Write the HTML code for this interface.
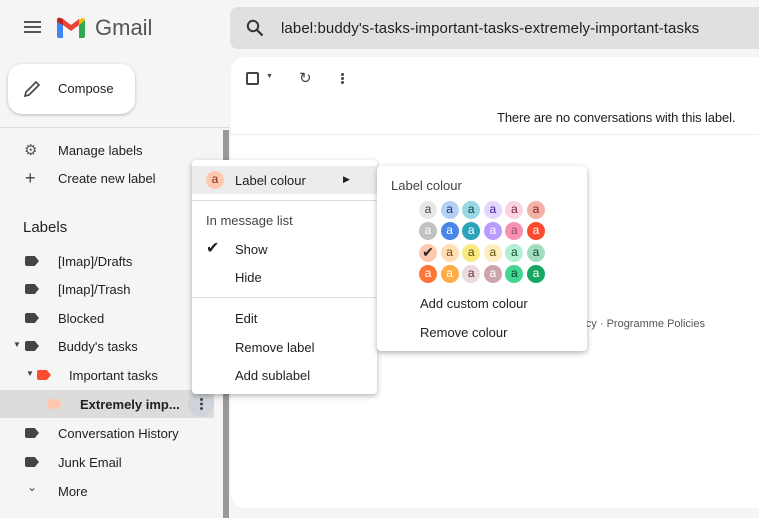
<!DOCTYPE html>
<html><head><style>
*{box-sizing:border-box;margin:0;padding:0}
body{width:759px;height:518px;overflow:hidden;background:#f5f5f5;font-family:"Liberation Sans",sans-serif;color:#202124;position:relative;font-size:13px}
.a{position:absolute}
.lbl{position:absolute;left:25px;width:14px;height:10px;background:#444;border-radius:2px 0 0 2px;clip-path:polygon(0 0,70% 0,100% 50%,70% 100%,0 100%)}
.t{position:absolute;font-size:13px;color:#202124;white-space:nowrap}
.menu{position:absolute;background:#fff;border-radius:4px;box-shadow:0 2px 6px rgba(0,0,0,.3)}
.sw{position:absolute;width:18px;height:18px;border-radius:50%;font-size:12px;text-align:center;line-height:17px}
</style></head><body>
<div class="a" style="left:24px;top:21px;width:17px;height:2px;background:#555;box-shadow:0 5px 0 #555,0 10px 0 #555"></div>
<svg class="a" style="left:57px;top:17px" width="28" height="21" viewBox="0 0 28 21">
<path d="M0 3v16a2 2 0 0 0 2 2h4V8z" fill="#4285f4"/>
<path d="M22 8v13h4a2 2 0 0 0 2-2V3z" fill="#34a853"/>
<path d="M22 2v6l6-5V3c0-2-3-3-4-1z" fill="#fbbc04"/>
<path d="M6 8V2l8 6 8-6v6l-8 6z" fill="#ea4335"/>
<path d="M0 3v2l6 3V2L4 1C2 0 0 1 0 3z" fill="#c5221f"/>
</svg>
<div class="t" style="left:95px;top:15px;font-size:22px;color:#555">Gmail</div>
<div class="a" style="left:230px;top:7px;width:540px;height:42px;background:#e0e0e0;border-radius:8px"></div>
<svg class="a" style="left:246px;top:19px" width="18" height="18" viewBox="0 0 18 18"><circle cx="7" cy="7" r="5.2" fill="none" stroke="#333" stroke-width="2"/><path d="M11 11l5.5 5.5" stroke="#333" stroke-width="2.2"/></svg>
<div class="t" style="left:281px;top:20px;font-size:15px;color:#202124;letter-spacing:0.1px">label:buddy's-tasks-important-tasks-extremely-important-tasks</div>
<div class="a" style="left:8px;top:64px;width:127px;height:50px;background:#fff;border-radius:14px;box-shadow:0 1px 3px rgba(0,0,0,.25)"></div>
<svg class="a" style="left:23px;top:80px" width="18" height="18" viewBox="0 0 18 18"><path d="M2 16l1-4L13 2l3 3L6 15z" fill="none" stroke="#444" stroke-width="1.6"/></svg>
<div class="t" style="left:58px;top:81px">Compose</div>
<div class="a" style="left:0;top:127px;width:230px;height:1px;background:#ddd"></div>
<div class="t" style="left:24px;top:141px;font-size:15px;color:#555">⚙</div>
<div class="t" style="left:58px;top:143px">Manage labels</div>
<div class="t" style="left:25px;top:168px;font-size:18px;color:#444">+</div>
<div class="t" style="left:58px;top:171px">Create new label</div>
<div class="t" style="left:23px;top:219px;font-size:15px">Labels</div>
<div class="lbl" style="top:256px"></div><div class="t" style="left:58px;top:254px">[Imap]/Drafts</div>
<div class="lbl" style="top:284px"></div><div class="t" style="left:58px;top:282px">[Imap]/Trash</div>
<div class="lbl" style="top:313px"></div><div class="t" style="left:58px;top:311px">Blocked</div>
<div class="t" style="left:13px;top:340px;font-size:8px;color:#444">▼</div>
<div class="lbl" style="top:341px"></div><div class="t" style="left:58px;top:339px">Buddy's tasks</div>
<div class="t" style="left:26px;top:369px;font-size:8px;color:#444">▼</div>
<div class="lbl" style="top:370px;left:37px;background:#fb4c2f"></div><div class="t" style="left:69px;top:368px">Important tasks</div>
<div class="a" style="left:0;top:390px;width:214px;height:28px;background:#dcdcdc"></div>
<div class="lbl" style="top:399px;left:48px;background:#ffc8af"></div><div class="t" style="left:80px;top:397px;font-weight:bold">Extremely imp...</div>
<div class="a" style="left:188px;top:391px;width:26px;height:26px;border-radius:50%;background:#cfd3da"></div>
<div class="a" style="left:200px;top:398px;width:3px;height:3px;background:#444;border-radius:50%;box-shadow:0 4.5px 0 #444,0 9px 0 #444"></div>
<div class="lbl" style="top:428px"></div><div class="t" style="left:58px;top:426px">Conversation History</div>
<div class="lbl" style="top:457px"></div><div class="t" style="left:58px;top:455px">Junk Email</div>
<div class="t" style="left:27px;top:480px;font-size:12px;color:#444">⌄</div>
<div class="t" style="left:58px;top:484px">More</div>
<div class="a" style="left:223px;top:130px;width:6px;height:388px;background:#999"></div>
<div class="a" style="left:231px;top:57px;width:540px;height:451px;background:#fff;border-radius:14px"></div>
<div class="a" style="left:246px;top:72px;width:13px;height:13px;border:2px solid #444;border-radius:2px"></div>
<div class="t" style="left:266px;top:73px;font-size:7px;color:#444">▼</div>
<div class="t" style="left:299px;top:69px;font-size:15px;color:#444">↻</div>
<div class="a" style="left:341px;top:73px;width:3px;height:3px;background:#444;border-radius:50%;box-shadow:0 4px 0 #444,0 8px 0 #444"></div>
<div class="a" style="left:231px;top:134px;width:528px;height:1px;background:#eee"></div>
<div class="t" style="left:497px;top:110px;letter-spacing:-0.12px">There are no conversations with this label.</div>
<div class="t" style="right:54px;top:318px;font-size:11px;color:#555">Privacy · Programme Policies</div>
<div class="menu" style="left:192px;top:160px;width:185px;height:234px"></div>
<div class="a" style="left:192px;top:166px;width:185px;height:28px;background:#ececec"></div>
<div class="sw" style="left:206px;top:171px;background:#ffc8af;color:#7a2e0b">a</div>
<div class="t" style="left:235px;top:173px">Label colour</div>
<div class="t" style="left:343px;top:174px;font-size:9px">▶</div>
<div class="a" style="left:192px;top:200px;width:185px;height:1px;background:#ddd"></div>
<div class="t" style="left:206px;top:213px;color:#444">In message list</div>
<div class="t" style="left:206px;top:238px;font-size:16px">✔</div>
<div class="t" style="left:235px;top:242px">Show</div>
<div class="t" style="left:235px;top:270px">Hide</div>
<div class="a" style="left:192px;top:297px;width:185px;height:1px;background:#ddd"></div>
<div class="t" style="left:235px;top:311px">Edit</div>
<div class="t" style="left:235px;top:340px">Remove label</div>
<div class="t" style="left:235px;top:368px">Add sublabel</div>
<div class="menu" style="left:377px;top:166px;width:210px;height:185px"></div>
<div class="t" style="left:391px;top:178px;color:#444">Label colour</div>
<div id="g"></div>
<div class="t" style="left:420px;top:296px">Add custom colour</div>
<div class="t" style="left:420px;top:325px">Remove colour</div>
<script>
var c=[["#e7e7e7","#464646"],["#b6cff5","#0d3472"],["#98d7e4","#0d3b44"],["#e3d7ff","#3d188e"],["#fbd3e0","#711a36"],["#f2b2a8","#8a1c0a"],
["#c2c2c2","#fff"],["#4986e7","#fff"],["#2da2bb","#fff"],["#b99aff","#fff"],["#f691b2","#994a64"],["#fb4c2f","#fff"],
["#ffc8af","#7a2e0b"],["#ffdeb5","#7a4706"],["#fbe983","#594c05"],["#fdedc1","#684e07"],["#b3efd3","#0b4f30"],["#a2dcc1","#04502e"],
["#ff7537","#fff"],["#ffad46","#fff"],["#ebdbde","#662e37"],["#cca6ac","#fff"],["#42d692","#094228"],["#16a765","#fff"]];
var h="";for(var i=0;i<24;i++){var x=419+(i%6)*21.6,y=201+Math.floor(i/6)*21.3;
h+='<div class="sw" style="left:'+x+'px;top:'+y+'px;background:'+c[i][0]+';color:'+c[i][1]+'">'+(i==12?'<span style="font-size:14px;color:#222">✔</span>':'a')+'</div>';}
document.getElementById("g").innerHTML=h;
</script>
</body></html>
